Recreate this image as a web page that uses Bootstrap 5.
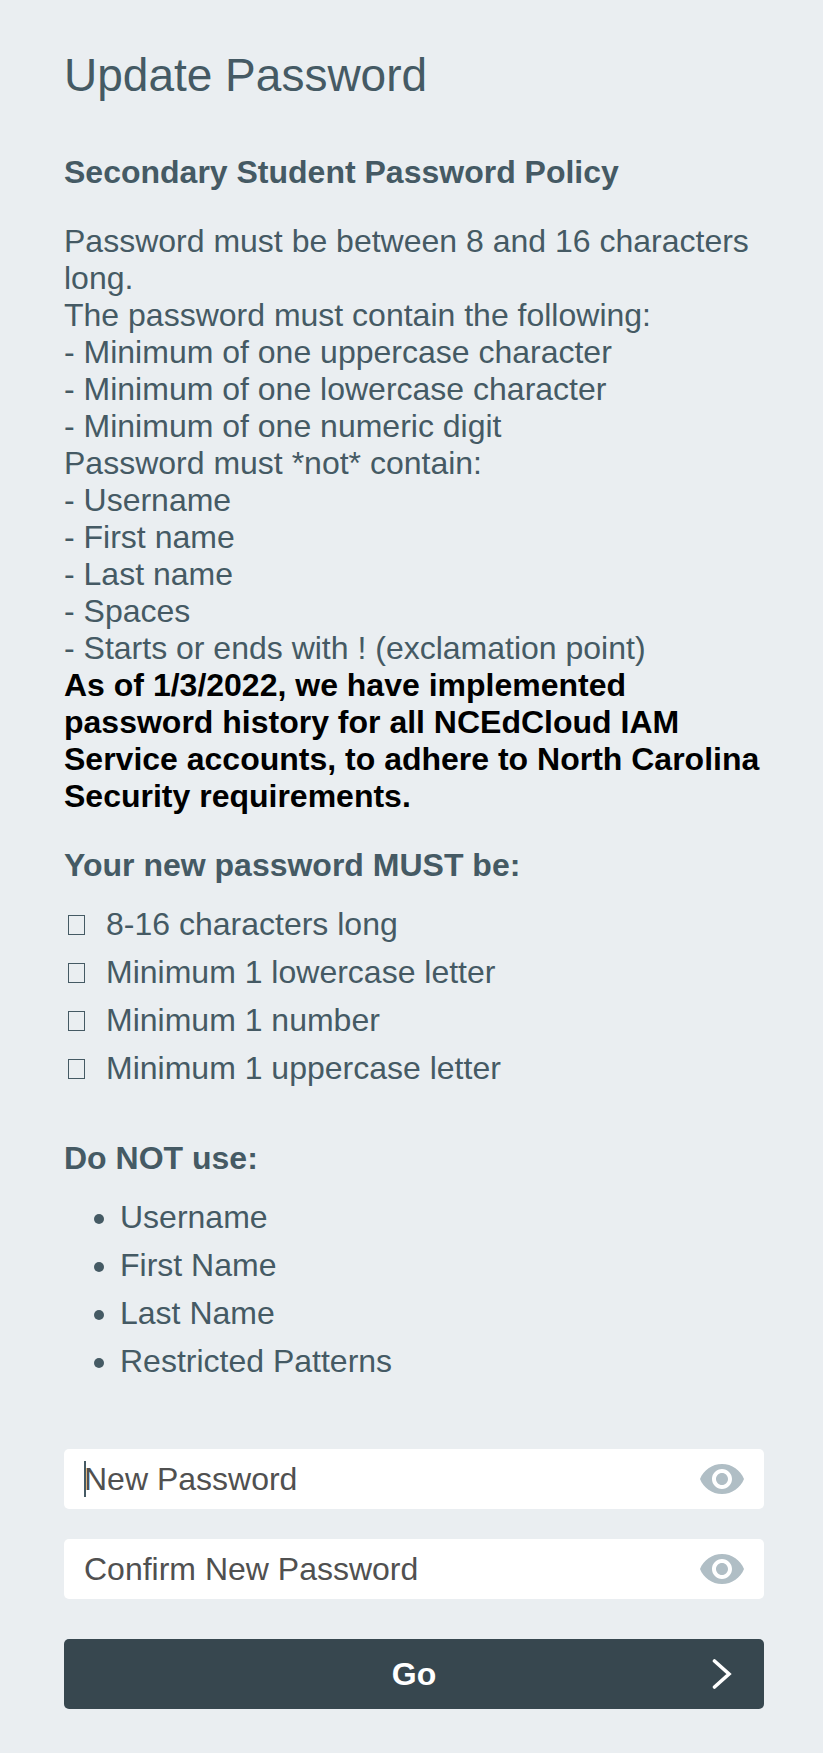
<!DOCTYPE html>
<html lang="en">
<head>
<meta charset="utf-8">
<title>Update Password</title>
<link href="https://cdn.jsdelivr.net/npm/bootstrap@5.3.0/dist/css/bootstrap.min.css" rel="stylesheet">
<style>
html,body{background:#eaeef1;}
body{font-family:"Liberation Sans",Arial,sans-serif;color:#455a64;font-size:32px;line-height:37px;}
.pw-page{padding:47px 59px 44px 64px;}
.pw-title{font-size:46px;line-height:56px;font-weight:400;margin:0 0 51px;color:#455a64;}
.pw-sub{font-size:32px;line-height:37px;font-weight:700;margin:0 0 32px;color:#455a64;}
.pw-black{font-weight:700;color:#000;}
.pw-policy{margin-bottom:32px;}
.pw-list{margin:0 0 48px;padding:0;list-style:none;}
.pw-list li{height:48px;line-height:48px;display:flex;align-items:center;}
.pw-box{width:17px;height:20px;border:1px solid #455a64;margin:1px 21px 0 4px;flex:none;}
.pw-dots{margin:0 0 64px;padding:0 0 0 56px;}
.pw-dots li{height:48px;line-height:48px;}
.pw-field{height:60px;margin-bottom:30px;}
.pw-field .form-control{height:60px;border:0;border-radius:5px;padding:1px 70px 0 20px;font-size:32px;color:#505050;background:#fff;box-shadow:none;}
.pw-field .form-control::placeholder{color:#505050;opacity:1;}
.pw-eye{position:absolute;right:20px;top:15px;width:44px;height:30px;fill:#b0bec5;}
.pw-caret{position:absolute;left:20px;top:12px;width:2px;height:36px;background:#455a64;}
.pw-go{height:70px;margin-top:10px;background:#37474f;border:0;border-radius:5px;color:#fff;font-size:32px;font-weight:700;}
.pw-go:hover{background:#37474f;color:#fff;}
.pw-chev{position:absolute;right:32px;top:20px;width:20px;height:30px;}
</style>
</head>
<body>
<main class="pw-page">
  <h1 class="pw-title">Update Password</h1>
  <h2 class="pw-sub">Secondary Student Password Policy</h2>
  <div class="pw-policy">Password must be between 8 and 16 characters long.<br>
  The password must contain the following:<br>
  - Minimum of one uppercase character<br>
  - Minimum of one lowercase character<br>
  - Minimum of one numeric digit<br>
  Password must *not* contain:<br>
  - Username<br>
  - First name<br>
  - Last name<br>
  - Spaces<br>
  - Starts or ends with ! (exclamation point)<br>
  <span class="pw-black">As of 1/3/2022, we have implemented password history for all NCEdCloud IAM Service accounts, to adhere to North Carolina Security requirements.</span></div>
  <h2 class="pw-sub mb-3">Your new password MUST be:</h2>
  <ul class="pw-list">
    <li><span class="pw-box"></span>8-16 characters long</li>
    <li><span class="pw-box"></span>Minimum 1 lowercase letter</li>
    <li><span class="pw-box"></span>Minimum 1 number</li>
    <li><span class="pw-box"></span>Minimum 1 uppercase letter</li>
  </ul>
  <h2 class="pw-sub mb-3">Do NOT use:</h2>
  <ul class="pw-dots">
    <li>Username</li>
    <li>First Name</li>
    <li>Last Name</li>
    <li>Restricted Patterns</li>
  </ul>
  <form>
    <div class="pw-field position-relative">
      <input class="form-control" type="password" placeholder="New Password" aria-label="New Password">
      <span class="pw-caret"></span>
      <svg class="pw-eye" viewBox="1 4.5 22 15" aria-hidden="true"><path d="M12 4.5C7 4.5 2.73 7.61 1 12c1.73 4.39 6 7.5 11 7.5s9.27-3.11 11-7.5c-1.73-4.39-6-7.5-11-7.5zM12 17c-2.76 0-5-2.24-5-5s2.24-5 5-5 5 2.24 5 5-2.24 5-5 5zm0-8c-1.66 0-3 1.34-3 3s1.34 3 3 3 3-1.34 3-3-1.34-3-3-3z"/></svg>
    </div>
    <div class="pw-field position-relative">
      <input class="form-control" type="password" placeholder="Confirm New Password" aria-label="Confirm New Password">
      <svg class="pw-eye" viewBox="1 4.5 22 15" aria-hidden="true"><path d="M12 4.5C7 4.5 2.73 7.61 1 12c1.73 4.39 6 7.5 11 7.5s9.27-3.11 11-7.5c-1.73-4.39-6-7.5-11-7.5zM12 17c-2.76 0-5-2.24-5-5s2.24-5 5-5 5 2.24 5 5-2.24 5-5 5zm0-8c-1.66 0-3 1.34-3 3s1.34 3 3 3 3-1.34 3-3-1.34-3-3-3z"/></svg>
    </div>
    <button type="button" class="btn pw-go w-100 position-relative">Go
      <svg class="pw-chev" viewBox="0 0 20 30" aria-hidden="true"><path d="M2.5 2L17 15L2.5 28" fill="none" stroke="#fff" stroke-width="3.6" stroke-linecap="round" stroke-linejoin="miter"/></svg>
    </button>
  </form>
</main>
<script src="https://cdn.jsdelivr.net/npm/bootstrap@5.3.0/dist/js/bootstrap.bundle.min.js"></script>
</body>
</html>
